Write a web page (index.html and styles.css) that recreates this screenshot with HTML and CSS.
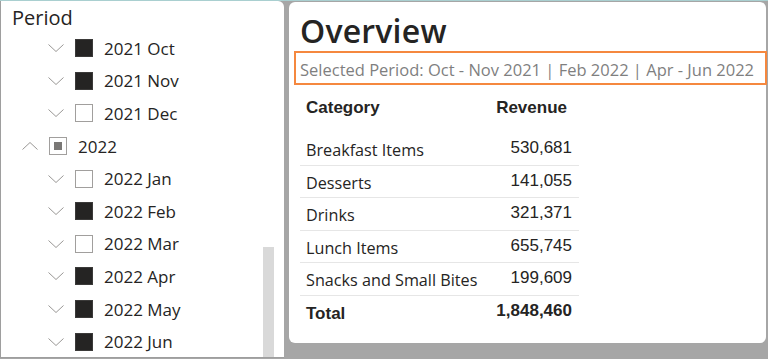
FILE: index.html
```html
<!DOCTYPE html>
<html>
<head>
<meta charset="utf-8">
<link rel="stylesheet" href="styles.css">
</head>
<body>
<div class="page">
  <div class="slicer">
    <div class="slicer-body">
      <div class="slicer-title">Period</div>
      <div class="row child"><svg class="chev" viewBox="0 0 16 8"><polyline points="0.5,0.5 8,7.5 15.5,0.5"/></svg><span class="box on"></span><span class="lbl">2021 Oct</span></div>
      <div class="row child"><svg class="chev" viewBox="0 0 16 8"><polyline points="0.5,0.5 8,7.5 15.5,0.5"/></svg><span class="box on"></span><span class="lbl">2021 Nov</span></div>
      <div class="row child"><svg class="chev" viewBox="0 0 16 8"><polyline points="0.5,0.5 8,7.5 15.5,0.5"/></svg><span class="box"></span><span class="lbl">2021 Dec</span></div>
      <div class="row parent"><svg class="chev" viewBox="0 0 16 8"><polyline points="0.5,7.5 8,0.5 15.5,7.5"/></svg><span class="box part"><span class="dot"></span></span><span class="lbl">2022</span></div>
      <div class="row child"><svg class="chev" viewBox="0 0 16 8"><polyline points="0.5,0.5 8,7.5 15.5,0.5"/></svg><span class="box"></span><span class="lbl">2022 Jan</span></div>
      <div class="row child"><svg class="chev" viewBox="0 0 16 8"><polyline points="0.5,0.5 8,7.5 15.5,0.5"/></svg><span class="box on"></span><span class="lbl">2022 Feb</span></div>
      <div class="row child"><svg class="chev" viewBox="0 0 16 8"><polyline points="0.5,0.5 8,7.5 15.5,0.5"/></svg><span class="box"></span><span class="lbl">2022 Mar</span></div>
      <div class="row child"><svg class="chev" viewBox="0 0 16 8"><polyline points="0.5,0.5 8,7.5 15.5,0.5"/></svg><span class="box on"></span><span class="lbl">2022 Apr</span></div>
      <div class="row child"><svg class="chev" viewBox="0 0 16 8"><polyline points="0.5,0.5 8,7.5 15.5,0.5"/></svg><span class="box on"></span><span class="lbl">2022 May</span></div>
      <div class="row child"><svg class="chev" viewBox="0 0 16 8"><polyline points="0.5,0.5 8,7.5 15.5,0.5"/></svg><span class="box on"></span><span class="lbl">2022 Jun</span></div>
    </div>
    <div class="track"><div class="thumb"></div></div>
  </div>
  <div class="report">
    <div class="title">Overview</div>
    <div class="subtitle">Selected Period: Oct - Nov 2021 | Feb 2022 | Apr - Jun 2022</div>
    <div class="table">
      <div class="trow head"><span class="c1">Category</span><span class="c2">Revenue</span></div>
      <div class="trow data"><span class="c1">Breakfast Items</span><span class="c2">530,681</span></div>
      <div class="trow data"><span class="c1">Desserts</span><span class="c2">141,055</span></div>
      <div class="trow data"><span class="c1">Drinks</span><span class="c2">321,371</span></div>
      <div class="trow data"><span class="c1">Lunch Items</span><span class="c2">655,745</span></div>
      <div class="trow data"><span class="c1">Snacks and Small Bites</span><span class="c2">199,609</span></div>
      <div class="trow total"><span class="c1">Total</span><span class="c2">1,848,460</span></div>
    </div>
  </div>
</div>
</body>
</html>
```

FILE: styles.css
```css
* { box-sizing: border-box; }
html, body { margin: 0; padding: 0; }
body {
  width: 768px;
  height: 359px;
  overflow: hidden;
  background: #a6a6a6;
  font-family: "Open Sans", "Noto Sans", sans-serif;
  color: #252423;
}
.page {
  display: flex;
  align-items: flex-start;
  gap: 5px;
  height: 359px;
  border-top: 1px solid #a9cfd0;
}
.slicer {
  width: 284px;
  height: 357px;
  background: #ffffff;
  border-left: 1px solid #9e9e9e;
  border-bottom: 1px solid #9e9e9e;
  border-top-right-radius: 6px;
  display: flex;
  overflow: hidden;
}
.slicer-body {
  flex: 1;
}
.slicer-title {
  font-size: 20px;
  line-height: 28px;
  padding: 3px 0 0 11px;
  height: 31px;
}
.row {
  height: 32.6px;
  display: flex;
  align-items: center;
}
.row.child { padding-left: 47px; }
.row.parent { padding-left: 21px; }
.chev {
  width: 16px;
  height: 8px;
  flex: none;
  overflow: visible;
}
.chev polyline {
  fill: none;
  stroke: #9a9896;
  stroke-width: 1;
}
.box {
  width: 18px;
  height: 18px;
  flex: none;
  margin-left: 11px;
  border: 1px solid #a19f9d;
  background: #ffffff;
  display: flex;
  align-items: center;
  justify-content: center;
}
.box.on {
  background: #252423;
  border-color: #3b3a39;
}
.dot {
  width: 8px;
  height: 8px;
  background: #7a7876;
}
.lbl {
  margin-left: 11px;
  font-size: 17px;
  white-space: nowrap;
}
.track {
  width: 11px;
  margin-right: 10px;
  flex: none;
  display: flex;
  flex-direction: column;
}
.thumb {
  margin-top: 246px;
  flex: 1;
  background: #d9d9d9;
}
.report {
  width: 477px;
  height: 341px;
  margin-top: 1px;
  background: #ffffff;
  border-radius: 6px;
  padding-left: 5px;
}
.title {
  font-size: 32px;
  font-weight: 600;
  line-height: 40px;
  padding: 9px 0 0 6px;
  height: 49px;
  letter-spacing: 0.2px;
}
.subtitle {
  width: 473px;
  height: 34px;
  border: 2px solid #f5883f;
  padding: 6px 0 0 4px;
  font-size: 16.5px;
  line-height: 22px;
  color: #7f7f7f;
  white-space: nowrap;
}
.table {
  width: 279px;
  margin-left: 6px;
  font-family: "Liberation Sans", Arial, sans-serif;
}
.trow {
  display: flex;
  justify-content: space-between;
}
.trow .c1 { padding-left: 6px; }
.trow .c2 { padding-right: 7px; text-align: right; }
.head {
  height: 48.2px;
  padding-top: 13px;
  font-size: 17px;
  font-weight: 700;
  line-height: 20px;
}
.head .c2 { padding-right: 12px; }
.data {
  height: 32.5px;
  border-bottom: 1px solid #e6e6e6;
}
.data .c1 {
  font-family: "Open Sans", "Noto Sans", sans-serif;
  font-size: 16.2px;
  line-height: 22px;
  padding-top: 6px;
}
.data .c2 {
  font-size: 17px;
  line-height: 20px;
  padding-top: 5px;
}
.total {
  height: 32.5px;
  font-size: 17px;
  font-weight: 700;
  line-height: 20px;
}
.total .c1 { padding-top: 8px; }
.total .c2 { padding-top: 5px; }
```
